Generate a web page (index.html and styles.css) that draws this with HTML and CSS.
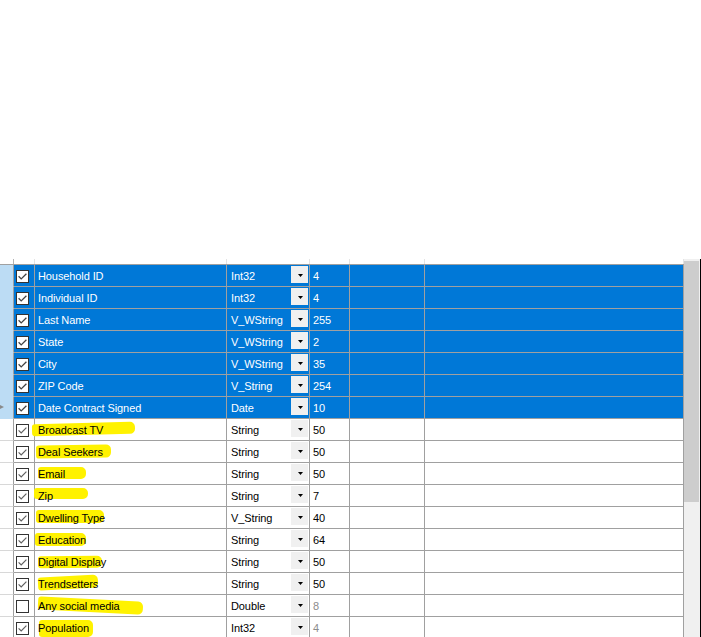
FILE: index.html
```html
<!DOCTYPE html>
<html>
<head>
<meta charset="utf-8">
<link rel="stylesheet" href="styles.css">
</head>
<body>
<div class="top-space"></div>
<div class="viewport">
  <div class="grid">
    <div class="header">
      <div class="c c-rh"></div>
      <div class="c c-cb"></div>
      <div class="c c-name"></div>
      <div class="c c-type"></div>
      <div class="c c-len"></div>
      <div class="c c-x1"></div>
      <div class="c c-x2"></div>
    </div>
    <div class="rows">
      <div class="row sel">
        <div class="c c-rh"></div>
        <div class="c c-cb"><span class="cbx on"><svg width="13" height="13" viewBox="0 0 13 13"><rect x="0.5" y="0.5" width="12" height="12" fill="#fff" stroke="#333"/><polyline points="2.6,6.3 5.2,8.9 10.4,3.7" fill="none" stroke="#444" stroke-width="1.3"/></svg></span></div>
        <div class="c c-name"><span class="t">Household ID</span></div>
        <div class="c c-type"><span class="t">Int32</span><span class="dd"><svg width="5" height="3" viewBox="0 0 5 3"><polygon points="0,0 5,0 2.5,3" fill="#000"/></svg></span></div>
        <div class="c c-len"><span class="t">4</span></div>
        <div class="c c-x1"></div>
        <div class="c c-x2"></div>
      </div>
      <div class="row sel">
        <div class="c c-rh"></div>
        <div class="c c-cb"><span class="cbx on"><svg width="13" height="13" viewBox="0 0 13 13"><rect x="0.5" y="0.5" width="12" height="12" fill="#fff" stroke="#333"/><polyline points="2.6,6.3 5.2,8.9 10.4,3.7" fill="none" stroke="#444" stroke-width="1.3"/></svg></span></div>
        <div class="c c-name"><span class="t">Individual ID</span></div>
        <div class="c c-type"><span class="t">Int32</span><span class="dd"><svg width="5" height="3" viewBox="0 0 5 3"><polygon points="0,0 5,0 2.5,3" fill="#000"/></svg></span></div>
        <div class="c c-len"><span class="t">4</span></div>
        <div class="c c-x1"></div>
        <div class="c c-x2"></div>
      </div>
      <div class="row sel">
        <div class="c c-rh"></div>
        <div class="c c-cb"><span class="cbx on"><svg width="13" height="13" viewBox="0 0 13 13"><rect x="0.5" y="0.5" width="12" height="12" fill="#fff" stroke="#333"/><polyline points="2.6,6.3 5.2,8.9 10.4,3.7" fill="none" stroke="#444" stroke-width="1.3"/></svg></span></div>
        <div class="c c-name"><span class="t">Last Name</span></div>
        <div class="c c-type"><span class="t">V_WString</span><span class="dd"><svg width="5" height="3" viewBox="0 0 5 3"><polygon points="0,0 5,0 2.5,3" fill="#000"/></svg></span></div>
        <div class="c c-len"><span class="t">255</span></div>
        <div class="c c-x1"></div>
        <div class="c c-x2"></div>
      </div>
      <div class="row sel">
        <div class="c c-rh"></div>
        <div class="c c-cb"><span class="cbx on"><svg width="13" height="13" viewBox="0 0 13 13"><rect x="0.5" y="0.5" width="12" height="12" fill="#fff" stroke="#333"/><polyline points="2.6,6.3 5.2,8.9 10.4,3.7" fill="none" stroke="#444" stroke-width="1.3"/></svg></span></div>
        <div class="c c-name"><span class="t">State</span></div>
        <div class="c c-type"><span class="t">V_WString</span><span class="dd"><svg width="5" height="3" viewBox="0 0 5 3"><polygon points="0,0 5,0 2.5,3" fill="#000"/></svg></span></div>
        <div class="c c-len"><span class="t">2</span></div>
        <div class="c c-x1"></div>
        <div class="c c-x2"></div>
      </div>
      <div class="row sel">
        <div class="c c-rh"></div>
        <div class="c c-cb"><span class="cbx on"><svg width="13" height="13" viewBox="0 0 13 13"><rect x="0.5" y="0.5" width="12" height="12" fill="#fff" stroke="#333"/><polyline points="2.6,6.3 5.2,8.9 10.4,3.7" fill="none" stroke="#444" stroke-width="1.3"/></svg></span></div>
        <div class="c c-name"><span class="t">City</span></div>
        <div class="c c-type"><span class="t">V_WString</span><span class="dd"><svg width="5" height="3" viewBox="0 0 5 3"><polygon points="0,0 5,0 2.5,3" fill="#000"/></svg></span></div>
        <div class="c c-len"><span class="t">35</span></div>
        <div class="c c-x1"></div>
        <div class="c c-x2"></div>
      </div>
      <div class="row sel">
        <div class="c c-rh"></div>
        <div class="c c-cb"><span class="cbx on"><svg width="13" height="13" viewBox="0 0 13 13"><rect x="0.5" y="0.5" width="12" height="12" fill="#fff" stroke="#333"/><polyline points="2.6,6.3 5.2,8.9 10.4,3.7" fill="none" stroke="#444" stroke-width="1.3"/></svg></span></div>
        <div class="c c-name"><span class="t">ZIP Code</span></div>
        <div class="c c-type"><span class="t">V_String</span><span class="dd"><svg width="5" height="3" viewBox="0 0 5 3"><polygon points="0,0 5,0 2.5,3" fill="#000"/></svg></span></div>
        <div class="c c-len"><span class="t">254</span></div>
        <div class="c c-x1"></div>
        <div class="c c-x2"></div>
      </div>
      <div class="row sel">
        <div class="c c-rh"><svg class="ind" width="6" height="6" viewBox="0 0 6 6"><polygon points="0,1 4,3 0,5" fill="#8a8a8a"/></svg></div>
        <div class="c c-cb"><span class="cbx on"><svg width="13" height="13" viewBox="0 0 13 13"><rect x="0.5" y="0.5" width="12" height="12" fill="#fff" stroke="#333"/><polyline points="2.6,6.3 5.2,8.9 10.4,3.7" fill="none" stroke="#444" stroke-width="1.3"/></svg></span></div>
        <div class="c c-name"><span class="t">Date Contract Signed</span></div>
        <div class="c c-type"><span class="t">Date</span><span class="dd"><svg width="5" height="3" viewBox="0 0 5 3"><polygon points="0,0 5,0 2.5,3" fill="#000"/></svg></span></div>
        <div class="c c-len"><span class="t">10</span></div>
        <div class="c c-x1"></div>
        <div class="c c-x2"></div>
      </div>

      <div class="row">
        <div class="c c-rh"></div>
        <div class="c c-cb"><span class="cbx"><svg width="13" height="13" viewBox="0 0 13 13"><rect x="0.5" y="0.5" width="12" height="12" fill="#fff" stroke="#333"/><polyline points="2.6,6.3 5.2,8.9 10.4,3.7" fill="none" stroke="#606060" stroke-width="1.2"/></svg></span></div>
        <div class="c c-name"><span class="hl h1"></span><span class="t">Broadcast TV</span></div>
        <div class="c c-type"><span class="t">String</span><span class="dd"><svg width="5" height="3" viewBox="0 0 5 3"><polygon points="0,0 5,0 2.5,3" fill="#000"/></svg></span></div>
        <div class="c c-len"><span class="t">50</span></div>
        <div class="c c-x1"></div>
        <div class="c c-x2"></div>
      </div>
      <div class="row">
        <div class="c c-rh"></div>
        <div class="c c-cb"><span class="cbx"><svg width="13" height="13" viewBox="0 0 13 13"><rect x="0.5" y="0.5" width="12" height="12" fill="#fff" stroke="#333"/><polyline points="2.6,6.3 5.2,8.9 10.4,3.7" fill="none" stroke="#606060" stroke-width="1.2"/></svg></span></div>
        <div class="c c-name"><span class="hl h2"></span><span class="t">Deal Seekers</span></div>
        <div class="c c-type"><span class="t">String</span><span class="dd"><svg width="5" height="3" viewBox="0 0 5 3"><polygon points="0,0 5,0 2.5,3" fill="#000"/></svg></span></div>
        <div class="c c-len"><span class="t">50</span></div>
        <div class="c c-x1"></div>
        <div class="c c-x2"></div>
      </div>
      <div class="row">
        <div class="c c-rh"></div>
        <div class="c c-cb"><span class="cbx"><svg width="13" height="13" viewBox="0 0 13 13"><rect x="0.5" y="0.5" width="12" height="12" fill="#fff" stroke="#333"/><polyline points="2.6,6.3 5.2,8.9 10.4,3.7" fill="none" stroke="#606060" stroke-width="1.2"/></svg></span></div>
        <div class="c c-name"><span class="hl h3"></span><span class="t">Email</span></div>
        <div class="c c-type"><span class="t">String</span><span class="dd"><svg width="5" height="3" viewBox="0 0 5 3"><polygon points="0,0 5,0 2.5,3" fill="#000"/></svg></span></div>
        <div class="c c-len"><span class="t">50</span></div>
        <div class="c c-x1"></div>
        <div class="c c-x2"></div>
      </div>
      <div class="row">
        <div class="c c-rh"></div>
        <div class="c c-cb"><span class="cbx"><svg width="13" height="13" viewBox="0 0 13 13"><rect x="0.5" y="0.5" width="12" height="12" fill="#fff" stroke="#333"/><polyline points="2.6,6.3 5.2,8.9 10.4,3.7" fill="none" stroke="#606060" stroke-width="1.2"/></svg></span></div>
        <div class="c c-name"><span class="hl h4"></span><span class="t">Zip</span></div>
        <div class="c c-type"><span class="t">String</span><span class="dd"><svg width="5" height="3" viewBox="0 0 5 3"><polygon points="0,0 5,0 2.5,3" fill="#000"/></svg></span></div>
        <div class="c c-len"><span class="t">7</span></div>
        <div class="c c-x1"></div>
        <div class="c c-x2"></div>
      </div>
      <div class="row">
        <div class="c c-rh"></div>
        <div class="c c-cb"><span class="cbx"><svg width="13" height="13" viewBox="0 0 13 13"><rect x="0.5" y="0.5" width="12" height="12" fill="#fff" stroke="#333"/><polyline points="2.6,6.3 5.2,8.9 10.4,3.7" fill="none" stroke="#606060" stroke-width="1.2"/></svg></span></div>
        <div class="c c-name"><span class="hl h5"></span><span class="t">Dwelling Type</span></div>
        <div class="c c-type"><span class="t">V_String</span><span class="dd"><svg width="5" height="3" viewBox="0 0 5 3"><polygon points="0,0 5,0 2.5,3" fill="#000"/></svg></span></div>
        <div class="c c-len"><span class="t">40</span></div>
        <div class="c c-x1"></div>
        <div class="c c-x2"></div>
      </div>
      <div class="row">
        <div class="c c-rh"></div>
        <div class="c c-cb"><span class="cbx"><svg width="13" height="13" viewBox="0 0 13 13"><rect x="0.5" y="0.5" width="12" height="12" fill="#fff" stroke="#333"/><polyline points="2.6,6.3 5.2,8.9 10.4,3.7" fill="none" stroke="#606060" stroke-width="1.2"/></svg></span></div>
        <div class="c c-name"><span class="hl h6"></span><span class="t">Education</span></div>
        <div class="c c-type"><span class="t">String</span><span class="dd"><svg width="5" height="3" viewBox="0 0 5 3"><polygon points="0,0 5,0 2.5,3" fill="#000"/></svg></span></div>
        <div class="c c-len"><span class="t">64</span></div>
        <div class="c c-x1"></div>
        <div class="c c-x2"></div>
      </div>
      <div class="row">
        <div class="c c-rh"></div>
        <div class="c c-cb"><span class="cbx"><svg width="13" height="13" viewBox="0 0 13 13"><rect x="0.5" y="0.5" width="12" height="12" fill="#fff" stroke="#333"/><polyline points="2.6,6.3 5.2,8.9 10.4,3.7" fill="none" stroke="#606060" stroke-width="1.2"/></svg></span></div>
        <div class="c c-name"><span class="hl h7"></span><span class="t">Digital Display</span></div>
        <div class="c c-type"><span class="t">String</span><span class="dd"><svg width="5" height="3" viewBox="0 0 5 3"><polygon points="0,0 5,0 2.5,3" fill="#000"/></svg></span></div>
        <div class="c c-len"><span class="t">50</span></div>
        <div class="c c-x1"></div>
        <div class="c c-x2"></div>
      </div>
      <div class="row">
        <div class="c c-rh"></div>
        <div class="c c-cb"><span class="cbx"><svg width="13" height="13" viewBox="0 0 13 13"><rect x="0.5" y="0.5" width="12" height="12" fill="#fff" stroke="#333"/><polyline points="2.6,6.3 5.2,8.9 10.4,3.7" fill="none" stroke="#606060" stroke-width="1.2"/></svg></span></div>
        <div class="c c-name"><span class="hl h8"></span><span class="t">Trendsetters</span></div>
        <div class="c c-type"><span class="t">String</span><span class="dd"><svg width="5" height="3" viewBox="0 0 5 3"><polygon points="0,0 5,0 2.5,3" fill="#000"/></svg></span></div>
        <div class="c c-len"><span class="t">50</span></div>
        <div class="c c-x1"></div>
        <div class="c c-x2"></div>
      </div>
      <div class="row">
        <div class="c c-rh"></div>
        <div class="c c-cb"><span class="cbx"><svg width="13" height="13" viewBox="0 0 13 13"><rect x="0.5" y="0.5" width="12" height="12" fill="#fff" stroke="#333"/></svg></span></div>
        <div class="c c-name"><span class="hl h9"></span><span class="t">Any social media</span></div>
        <div class="c c-type"><span class="t">Double</span><span class="dd"><svg width="5" height="3" viewBox="0 0 5 3"><polygon points="0,0 5,0 2.5,3" fill="#000"/></svg></span></div>
        <div class="c c-len"><span class="t dim">8</span></div>
        <div class="c c-x1"></div>
        <div class="c c-x2"></div>
      </div>
      <div class="row">
        <div class="c c-rh"></div>
        <div class="c c-cb"><span class="cbx"><svg width="13" height="13" viewBox="0 0 13 13"><rect x="0.5" y="0.5" width="12" height="12" fill="#fff" stroke="#333"/><polyline points="2.6,6.3 5.2,8.9 10.4,3.7" fill="none" stroke="#606060" stroke-width="1.2"/></svg></span></div>
        <div class="c c-name"><span class="hl h10"></span><span class="t">Population</span></div>
        <div class="c c-type"><span class="t">Int32</span><span class="dd"><svg width="5" height="3" viewBox="0 0 5 3"><polygon points="0,0 5,0 2.5,3" fill="#000"/></svg></span></div>
        <div class="c c-len"><span class="t dim">4</span></div>
        <div class="c c-x1"></div>
        <div class="c c-x2"></div>
      </div>
    </div>
  </div>
  <div class="vscroll">
    <div class="track"><div class="thumb"></div></div>
    <div class="edge"></div>
  </div>
</div>
</body>
</html>
```

FILE: styles.css
```css
html, body {
  margin: 0;
  padding: 0;
  background: #ffffff;
}
body {
  width: 701px;
  height: 637px;
  overflow: hidden;
  font-family: "Liberation Sans", Arial, sans-serif;
  font-size: 11px;
  letter-spacing: -0.1px;
  color: #000;
}
.top-space {
  height: 259px;
}
.viewport {
  display: flex;
  height: 378px;
}
.grid {
  width: 684px;
  flex: none;
}
.header {
  display: flex;
  height: 5px;
  border-bottom: 1px solid #a0a0a0;
}
.header .c {
  border-right: 1px solid #e3e3e3;
}
.header .c-rh {
  border-right-color: #b4b4b4;
}
.row {
  display: flex;
  height: 22px;
  box-sizing: border-box;
}
.c {
  box-sizing: border-box;
  flex: none;
  height: 100%;
  border-right: 1px solid #a0a0a0;
}
.row .c {
  border-bottom: 1px solid #a0a0a0;
  display: flex;
  align-items: center;
}
.c-rh { width: 14px; }
.c-cb { width: 21px; }
.c-name { width: 192px; position: relative; padding-left: 3px; }
.c-type { width: 83px; padding-left: 4px; justify-content: space-between; }
.c-len { width: 40px; padding-left: 3px; }
.c-x1 { width: 75px; }
.c-x2 { width: 259px; }

.row .c-rh {
  border-bottom-color: #d8d8d8;
  position: relative;
}
.row.sel .c-rh {
  background: #bcdcf4;
  border-bottom-color: #bcdcf4;
}
.row.sel .c:not(.c-rh) {
  background: #0078d7;
  color: #ffffff;
}
.ind {
  position: absolute;
  left: 0;
  top: 7px;
}
.cbx {
  display: block;
  width: 13px;
  height: 13px;
  margin-left: 2px;
  margin-top: 1px;
}
.cbx svg { display: block; }
.t {
  position: relative;
  white-space: nowrap;
  line-height: 14px;
  margin-top: 1px;
}
.t.dim { color: #8c8c8c; }
.dd {
  width: 17px;
  height: 17px;
  margin-right: 1px;
  margin-top: -2px;
  background: #f0f0f0;
  display: flex;
  align-items: center;
  justify-content: center;
}
.dd svg { display: block; margin-left: 1px; margin-top: 1px; }

.hl {
  position: absolute;
  background: #fff200;
  border-radius: 3px 5px 5px 3px;
}
.h1 { left: -3px; top: 4px; width: 103px; height: 12px; transform: rotate(-1.5deg); }
.h2 { left: 1px; top: 4px; width: 75px; height: 13px; transform: rotate(-1deg); }
.h3 { left: 3px; top: 4px; width: 48px; height: 12px; }
.h4 { left: -1px; top: 3px; width: 54px; height: 11px; }
.h5 { left: 1px; top: 3px; width: 68px; height: 13px; }
.h6 { left: 0px; top: 4px; width: 51px; height: 13px; }
.h7 { left: 3px; top: 5px; width: 64px; height: 12px; transform: rotate(-0.5deg); }
.h8 { left: 3px; top: 3px; width: 60px; height: 13px; transform: rotate(-3deg); }
.h9 { left: 3px; top: 4px; width: 105px; height: 13px; transform: rotate(3deg); }
.h10 { left: 4px; top: 3px; width: 54px; height: 17px; }

.vscroll {
  display: flex;
  width: 17px;
  flex: none;
}
.track {
  width: 16px;
  background: #f0f0f0;
}
.thumb {
  width: 15px;
  height: 241px;
  margin-top: 2px;
  background: #cdcdcd;
}
.edge {
  width: 1px;
  background: #000;
}
```
